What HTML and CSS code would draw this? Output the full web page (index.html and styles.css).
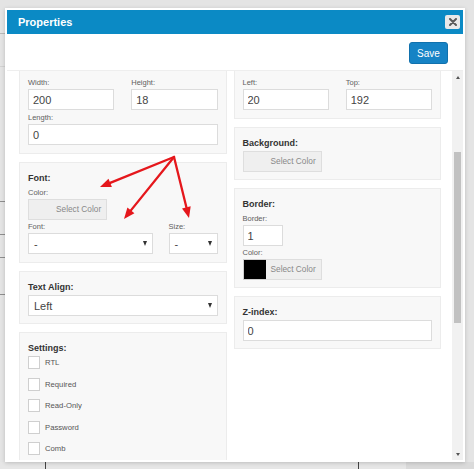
FILE: index.html
```html
<!DOCTYPE html>
<html lang="en">
<head>
<meta charset="utf-8">
<title>Properties</title>
<link rel="stylesheet" href="styles.css">
</head>
<body>
<div class="backdrop">
  <div class="bg-main">
    <div class="bg-left">
      <div class="bg-rule r1"></div>
      <div class="bg-rule r2"></div>
      <div class="bg-rule r3"></div>
      <div class="bg-rule r4"></div>
      <div class="bg-rule r5"></div>
      <div class="bg-rule r6"></div>
    </div>
  </div>
  <div class="bg-bottom">
    <div class="bg-sheet"></div>
  </div>
</div>

<div class="dialog">
  <div class="titlebar">
    <span class="title">Properties</span>
    <button class="close" aria-label="Close">
      <svg width="8" height="8" viewBox="0 0 8 8"><path d="M1 1L7 7M7 1L1 7" stroke="#5a5a5a" stroke-width="2" stroke-linecap="round"/></svg>
    </button>
  </div>
  <div class="toolbar">
    <button class="save">Save</button>
  </div>
  <div class="viewport">
    <div class="scroll-area">
      <div class="content">
        <div class="col">
          <section class="panel panel-size">
            <div class="pair">
              <div class="field">
                <label>Width:</label>
                <input class="input" type="text" value="200">
              </div>
              <div class="field">
                <label>Height:</label>
                <input class="input" type="text" value="18">
              </div>
            </div>
            <div class="field">
              <label>Length:</label>
              <input class="input" type="text" value="0">
            </div>
          </section>

          <section class="panel panel-font">
            <h3>Font:</h3>
            <div class="field">
              <label>Color:</label>
              <div class="color-picker">
                <span class="swatch"></span><span class="color-label">Select Color</span>
              </div>
            </div>
            <div class="font-row">
              <div class="field">
                <label>Font:</label>
                <div class="select"><span>-</span><span class="caret"></span></div>
              </div>
              <div class="field">
                <label>Size:</label>
                <div class="select"><span>-</span><span class="caret"></span></div>
              </div>
            </div>
          </section>

          <section class="panel">
            <h3>Text Align:</h3>
            <div class="select"><span>Left</span><span class="caret"></span></div>
          </section>

          <section class="panel panel-settings">
            <h3>Settings:</h3>
            <ul class="checks">
              <li><span class="box"></span>RTL</li>
              <li><span class="box"></span>Required</li>
              <li><span class="box"></span>Read-Only</li>
              <li><span class="box"></span>Password</li>
              <li><span class="box"></span>Comb</li>
            </ul>
          </section>
        </div>

        <div class="col">
          <section class="panel panel-size">
            <div class="pair">
              <div class="field">
                <label>Left:</label>
                <input class="input" type="text" value="20">
              </div>
              <div class="field">
                <label>Top:</label>
                <input class="input" type="text" value="192">
              </div>
            </div>
          </section>

          <section class="panel">
            <h3>Background:</h3>
            <div class="color-picker">
              <span class="swatch"></span><span class="color-label">Select Color</span>
            </div>
          </section>

          <section class="panel">
            <h3>Border:</h3>
            <div class="field">
              <label>Border:</label>
              <input class="input input-narrow" type="text" value="1">
            </div>
            <div class="field">
              <label>Color:</label>
              <div class="color-picker">
                <span class="swatch swatch-black"></span><span class="color-label">Select Color</span>
              </div>
            </div>
          </section>

          <section class="panel">
            <h3>Z-index:</h3>
            <input class="input" type="text" value="0">
          </section>
        </div>
      </div>
    </div>
    <div class="scrollbar">
      <div class="sb-btn"><span class="sb-up"></span></div>
      <div class="sb-track"><div class="sb-thumb"></div></div>
      <div class="sb-btn"><span class="sb-down"></span></div>
    </div>
  </div>
</div>

<svg class="annotations" width="474" height="469" viewBox="0 0 474 469">
  <g stroke="#e5171c" stroke-width="2.3" stroke-linecap="round" fill="none">
    <line x1="174" y1="157" x2="110.2" y2="182.9"/>
    <line x1="174" y1="157" x2="130.9" y2="210.4"/>
    <line x1="174" y1="157" x2="186.4" y2="207.3"/>
  </g>
  <g fill="#e5171c">
    <polygon points="100,187 108.5,178.7 111.9,187"/>
    <polygon points="124,219 127.4,207.6 134.4,213.3"/>
    <polygon points="189,218 182,208.4 190.7,206.2"/>
  </g>
</svg>
</body>
</html>
```

FILE: styles.css
```css
* { box-sizing: border-box; }

html, body {
  margin: 0;
  padding: 0;
}

body {
  width: 474px;
  height: 469px;
  overflow: hidden;
  background: #e4e4e4;
  font-family: "Liberation Sans", Arial, sans-serif;
  color: #333;
  position: relative;
}

/* ---- page behind the modal ---- */
.backdrop {
  height: 469px;
  display: flex;
  flex-direction: column;
}
.bg-main {
  height: 462px;
  display: flex;
}
.bg-left {
  width: 6px;
  display: flex;
  flex-direction: column;
}
.bg-rule {
  height: 1px;
  background: #b9b9b9;
}
.r1 { margin-top: 33px; }
.r2 { margin-top: 32px; background: #d2d2d2; }
.r3 { margin-top: 134px; background: #8e8e8e; }
.r4 { margin-top: 32px; background: #8e8e8e; }
.r5 { margin-top: 22px; background: #8e8e8e; }
.r6 { margin-top: 36px; background: #8e8e8e; }

.bg-bottom {
  height: 7px;
  display: flex;
  background: linear-gradient(to right, #e6e6e6 0, #e6e6e6 406px, #dadada 406px);
}
.bg-sheet {
  margin-left: 45px;
  width: 314px;
  border-left: 1px solid #444;
  border-right: 1px solid #444;
}

/* ---- dialog ---- */
.dialog {
  position: absolute;
  left: 5px;
  top: 8px;
  width: 460px;
  height: 454px;
  padding: 2px;
  background: #fff;
  box-shadow: 0 1px 4px rgba(0, 0, 0, 0.18);
  display: flex;
  flex-direction: column;
}

.titlebar {
  height: 24px;
  flex: none;
  background: #0b8ac5;
  display: flex;
  align-items: center;
  justify-content: space-between;
  padding: 0 3px 0 11px;
}
.title {
  color: #fff;
  font-weight: bold;
  font-size: 11px;
}
.close {
  width: 15px;
  height: 14px;
  border: 0;
  border-radius: 2px;
  background: #e9e9e9;
  padding: 0;
  display: flex;
  align-items: center;
  justify-content: center;
}

.toolbar {
  height: 37px;
  flex: none;
  border-bottom: 1px solid #eeeeee;
  display: flex;
  justify-content: flex-end;
  align-items: flex-start;
  padding: 8px 15px 0 0;
}
.save {
  width: 39px;
  height: 22px;
  border: 1px solid #1171ad;
  border-radius: 3px;
  background: #1683c5;
  color: #fff;
  font-family: "Liberation Sans", Arial, sans-serif;
  font-size: 10px;
  padding: 0;
}

.viewport {
  flex: 1;
  min-height: 0;
  display: flex;
}
.scroll-area {
  flex: 1;
  overflow: hidden;
}
.content {
  margin-top: -4px;
  padding: 0 11px 0 12px;
  display: grid;
  grid-template-columns: 1fr 1fr;
  column-gap: 7px;
  align-items: start;
}
.col {
  display: flex;
  flex-direction: column;
  gap: 8px;
}

.panel {
  background: #f8f8f8;
  border: 1px solid #ececec;
  padding: 7px 8px 7px 8px;
}
.panel-size {
  padding-top: 8px;
  padding-bottom: 8px;
}
.panel-font {
  padding-bottom: 8px;
}
.panel-settings {
  padding-bottom: 20px;
}

.panel h3 {
  margin: 0;
  font-size: 9px;
  font-weight: bold;
  line-height: 16px;
  color: #333;
}

.field {
  display: flex;
  flex-direction: column;
  align-items: flex-start;
}
.field label {
  font-size: 7.5px;
  line-height: 13px;
  color: #606060;
}
.panel-size .pair + .field {
  margin-top: 1px;
}

.pair {
  display: grid;
  grid-template-columns: 1fr 1fr;
  column-gap: 17px;
}
.font-row {
  display: grid;
  grid-template-columns: 1fr 49px;
  column-gap: 16px;
}

.input {
  display: block;
  width: 100%;
  height: 21px;
  border: 1px solid #dcdcdc;
  background: #fff;
  padding: 0 4px;
  margin: 0;
  font-family: "Liberation Sans", Arial, sans-serif;
  font-size: 11px;
  color: #444;
  outline: none;
}
.input-narrow {
  width: 40px;
}

.color-picker {
  display: flex;
  width: max-content;
  height: 21px;
}
.swatch {
  width: 23px;
  height: 21px;
  background: #efefef;
  border: 1px solid #dedede;
  border-right: 0;
}
.swatch-black {
  background: #000;
  border-color: #d0d0d0;
}
.color-label {
  height: 21px;
  background: #efefef;
  border: 1px solid #dedede;
  border-left: 0;
  padding: 0 5px;
  font-size: 8.3px;
  line-height: 19px;
  color: #888;
}

.select {
  width: 100%;
  height: 21px;
  border: 1px solid #dcdcdc;
  background: #fff;
  display: flex;
  align-items: center;
  justify-content: space-between;
  padding: 0 5px 0 5px;
  font-size: 11px;
  color: #444;
}
.caret {
  width: 0;
  height: 0;
  border-left: 2.5px solid transparent;
  border-right: 2.5px solid transparent;
  border-top: 5px solid #333;
}

.checks {
  list-style: none;
  margin: 0;
  padding: 0;
  display: flex;
  flex-direction: column;
  gap: 8.5px;
}
.checks li {
  display: flex;
  align-items: center;
  height: 13px;
  font-size: 7.7px;
  color: #555;
}
.box {
  width: 12px;
  height: 13px;
  border: 1px solid #cfcfcf;
  background: #fff;
  margin-right: 5px;
}

/* ---- fake scrollbar ---- */
.scrollbar {
  width: 11px;
  flex: none;
  background: #f1f1f1;
  display: flex;
  flex-direction: column;
}
.sb-btn {
  height: 12px;
  display: flex;
  align-items: center;
  justify-content: center;
}
.sb-up {
  width: 0;
  height: 0;
  border-left: 2.5px solid transparent;
  border-right: 2.5px solid transparent;
  border-bottom: 3px solid #555;
}
.sb-down {
  width: 0;
  height: 0;
  border-left: 2.5px solid transparent;
  border-right: 2.5px solid transparent;
  border-top: 3px solid #555;
}
.sb-track {
  flex: 1;
  padding: 69px 2px 0 2px;
}
.sb-thumb {
  height: 171px;
  background: #c1c1c1;
}

/* ---- annotation overlay ---- */
.annotations {
  position: absolute;
  left: 0;
  top: 0;
  pointer-events: none;
}
```
